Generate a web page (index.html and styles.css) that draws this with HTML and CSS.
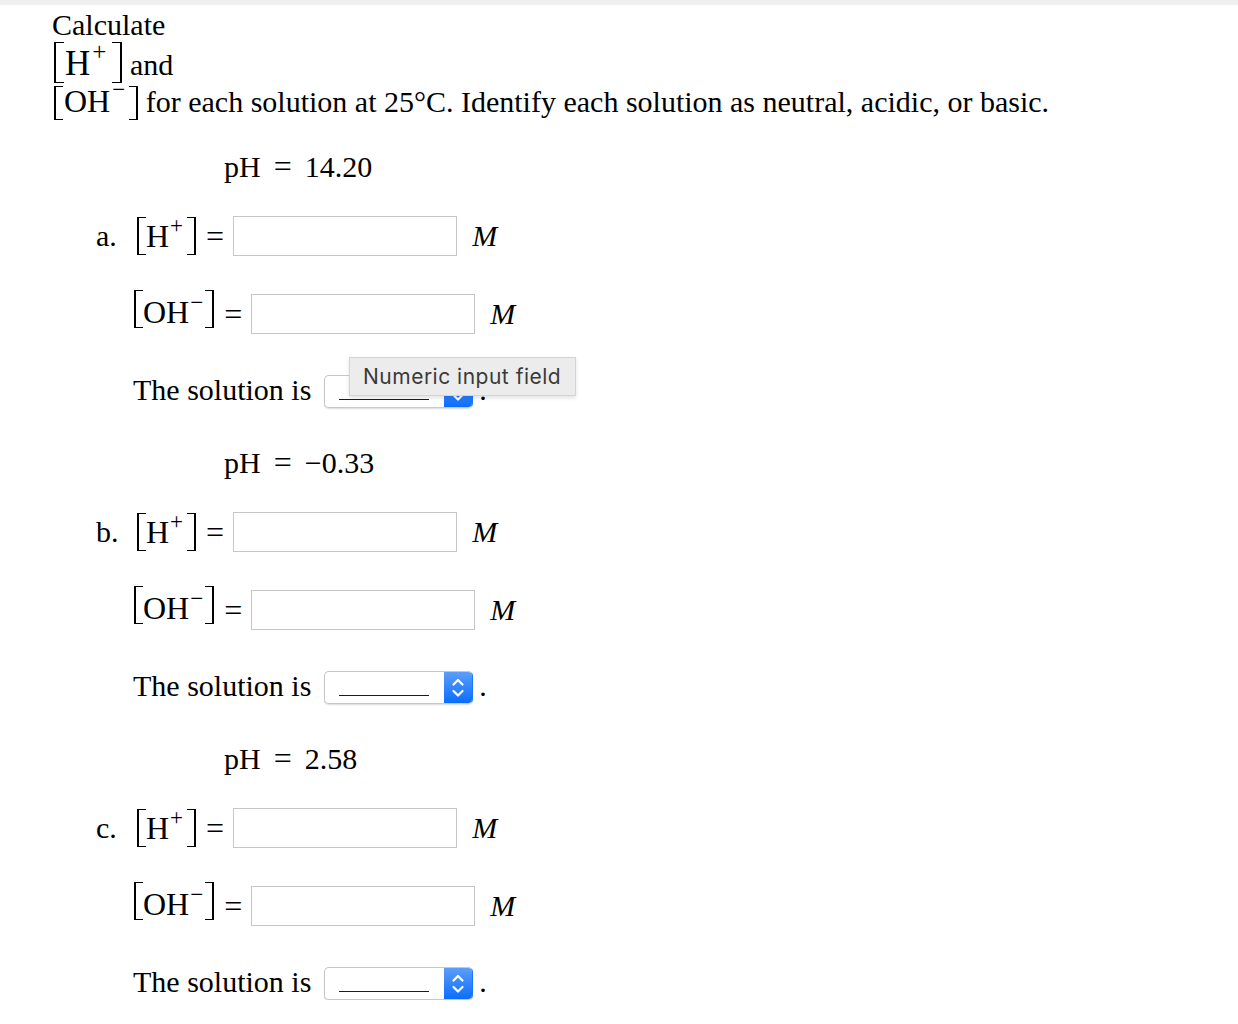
FILE: index.html
```html
<!DOCTYPE html>
<html lang="en">

<head>
    <meta http-equiv="Content-Type" content="text/html;charset=UTF-8">
    <meta name="viewport" content="width=device-width, initial-scale=1.0">
    <title>Calculate [H+] and [OH-]</title>
    <link rel="stylesheet" href="styles.css">
</head>

<body>
    <main class="question">
        <div class="intro">
            <div class="intro-line intro-line-first">Calculate</div>
            <div class="intro-line intro-line-ion"><span class="ion ion-h"><span class="bracket bracket-left"></span>H<sup class="charge">+</sup><span class="bracket bracket-right"></span></span> and</div>
            <div class="intro-line intro-line-last"><span class="ion ion-oh"><span class="bracket bracket-left"></span>OH<sup class="charge">&minus;</sup><span class="bracket bracket-right"></span></span> for each solution at 25°C. Identify each solution as neutral, acidic, or basic.</div>
        </div>

        <section class="part">
            <div class="ph">pH<span class="eq">=</span>14.20</div>
            <div class="row row-h">
                <span class="part-label">a.</span>
                <span class="ion ion-h"><span class="bracket bracket-left"></span>H<sup class="charge">+</sup><span class="bracket bracket-right"></span></span>
                <span class="eq">=</span>
                <input class="answer" type="text" aria-label="Numeric input field">
                <span class="unit">M</span>
            </div>
            <div class="row row-oh">
                <span class="ion ion-oh"><span class="bracket bracket-left"></span>OH<sup class="charge">&minus;</sup><span class="bracket bracket-right"></span></span>
                <span class="eq">=</span>
                <input class="answer" type="text" aria-label="Numeric input field">
                <span class="unit">M</span>
            </div>
            <div class="row row-choice">
                <span class="choice-label">The solution is</span>
                <div class="select">
                    <div class="select-value"><div class="select-blank"></div></div>
                    <div class="select-button">
                        <svg width="28" height="31" viewBox="0 0 28 31" fill="none" stroke="#ffffff" stroke-width="2.2" stroke-linecap="round" stroke-linejoin="round">
                            <polyline points="9.5,12.5 14,8 18.5,12.5" />
                            <polyline points="9.5,19 14,23.5 18.5,19" />
                        </svg>
                    </div>
                </div>
                <span class="period">.</span>
                <div class="tooltip">Numeric input field</div>
            </div>
        </section>

        <section class="part">
            <div class="ph">pH<span class="eq">=</span>&minus;0.33</div>
            <div class="row row-h">
                <span class="part-label">b.</span>
                <span class="ion ion-h"><span class="bracket bracket-left"></span>H<sup class="charge">+</sup><span class="bracket bracket-right"></span></span>
                <span class="eq">=</span>
                <input class="answer" type="text" aria-label="Numeric input field">
                <span class="unit">M</span>
            </div>
            <div class="row row-oh">
                <span class="ion ion-oh"><span class="bracket bracket-left"></span>OH<sup class="charge">&minus;</sup><span class="bracket bracket-right"></span></span>
                <span class="eq">=</span>
                <input class="answer" type="text" aria-label="Numeric input field">
                <span class="unit">M</span>
            </div>
            <div class="row row-choice">
                <span class="choice-label">The solution is</span>
                <div class="select">
                    <div class="select-value"><div class="select-blank"></div></div>
                    <div class="select-button">
                        <svg width="28" height="31" viewBox="0 0 28 31" fill="none" stroke="#ffffff" stroke-width="2.2" stroke-linecap="round" stroke-linejoin="round">
                            <polyline points="9.5,12.5 14,8 18.5,12.5" />
                            <polyline points="9.5,19 14,23.5 18.5,19" />
                        </svg>
                    </div>
                </div>
                <span class="period">.</span>
            </div>
        </section>

        <section class="part">
            <div class="ph">pH<span class="eq">=</span>2.58</div>
            <div class="row row-h">
                <span class="part-label">c.</span>
                <span class="ion ion-h"><span class="bracket bracket-left"></span>H<sup class="charge">+</sup><span class="bracket bracket-right"></span></span>
                <span class="eq">=</span>
                <input class="answer" type="text" aria-label="Numeric input field">
                <span class="unit">M</span>
            </div>
            <div class="row row-oh">
                <span class="ion ion-oh"><span class="bracket bracket-left"></span>OH<sup class="charge">&minus;</sup><span class="bracket bracket-right"></span></span>
                <span class="eq">=</span>
                <input class="answer" type="text" aria-label="Numeric input field">
                <span class="unit">M</span>
            </div>
            <div class="row row-choice">
                <span class="choice-label">The solution is</span>
                <div class="select">
                    <div class="select-value"><div class="select-blank"></div></div>
                    <div class="select-button">
                        <svg width="28" height="31" viewBox="0 0 28 31" fill="none" stroke="#ffffff" stroke-width="2.2" stroke-linecap="round" stroke-linejoin="round">
                            <polyline points="9.5,12.5 14,8 18.5,12.5" />
                            <polyline points="9.5,19 14,23.5 18.5,19" />
                        </svg>
                    </div>
                </div>
                <span class="period">.</span>
            </div>
        </section>
    </main>
</body>

</html>
```

FILE: styles.css
```css
body {
    margin: 0;
    border-top: 5px solid #f0f0f0;
    background-color: #ffffff;
    color: #000000;
    font-family: "Liberation Serif", "Times New Roman", serif;
    font-size: 30px;
}

.question {
    padding: 2px 0 0 52px;
}

.intro-line {
    white-space: nowrap;
}

.intro-line-first {
    height: 35px;
    line-height: 36px;
}

.intro-line-ion {
    height: 43px;
    line-height: 40px;
}

.intro-line-last {
    height: 36px;
    line-height: 33px;
}

.intro .ion {
    margin-left: 2px;
}

/* ion with square brackets */
.ion {
    display: inline-block;
    font-size: 32px;
    white-space: nowrap;
}

.bracket {
    display: inline-block;
    box-sizing: border-box;
    width: 9px;
    border: 0 solid #000000;
}

.bracket-left {
    border-width: 1.5px 0 1.5px 2px;
}

.bracket-right {
    border-width: 1.5px 2px 1.5px 0;
}

.ion-h .bracket {
    height: 38px;
    vertical-align: -8px;
}

.ion-h .bracket-right {
    margin-left: 4px;
}

.intro .ion-h {
    font-size: 35px;
}

.intro .ion-h .bracket {
    width: 10px;
    height: 41px;
}

.intro .ion-h .bracket-left {
    margin-right: 1px;
}

.intro .ion-h .bracket-right {
    margin-left: 6px;
}

.ion-oh .bracket {
    height: 38px;
    vertical-align: -5px;
}

.ion-oh .bracket-right {
    margin-left: 2px;
}

.row-oh .ion {
    margin-bottom: 6px;
}

.intro .ion-oh .bracket {
    height: 34px;
    vertical-align: -8px;
}

.intro .ion-oh .bracket-left {
    margin-right: 1px;
}

.intro .ion-oh .bracket-right {
    margin-left: 4px;
}

.charge {
    font-size: 23px;
    line-height: 0;
    margin-left: 1px;
}

.ion-h .charge {
    vertical-align: 14px;
}

.ion-oh .charge {
    vertical-align: 13.5px;
}

.intro .ion-h .charge {
    font-size: 25px;
    margin-left: 2px;
    vertical-align: 15px;
}

.intro .ion-oh .charge {
    margin-left: 2px;
    vertical-align: 15px;
}

.eq {
    font-size: 32px;
    margin: 0 9px 0 10px;
}

.part {
    margin-top: 34px;
}

.intro + .part {
    margin-top: 25px;
}

.ph {
    height: 40px;
    line-height: 40px;
    margin-left: 172px;
}

.ph .eq {
    margin: 0 13px;
}

.row {
    display: flex;
    align-items: center;
    height: 40px;
    line-height: 40px;
    padding-left: 82px;
}

.row-h {
    margin-top: 30px;
}

.row-oh {
    margin-top: 38px;
}

.row-choice {
    position: relative;
    height: 33px;
    line-height: 33px;
    margin-top: 41px;
    padding-left: 81px;
}

.part-label {
    width: 41px;
    margin-left: -38px;
    flex-shrink: 0;
}

.answer {
    box-sizing: border-box;
    width: 224px;
    height: 40px;
    margin: 0;
    padding: 0 8px;
    border: 1px solid #c6c6c6;
    border-radius: 0;
    background-color: #ffffff;
    font: inherit;
    outline: none;
}

.unit {
    font-style: italic;
    margin-left: 15px;
}

.choice-label {
    white-space: nowrap;
    margin-bottom: 4px;
}

.select {
    display: flex;
    box-sizing: border-box;
    width: 149px;
    height: 33px;
    margin-left: 13px;
    border: 1px solid #c9c9c9;
    border-right-color: #1f78fb;
    border-radius: 5px;
    overflow: hidden;
    background-color: #ffffff;
    box-shadow: 0 1px 1.5px rgba(0, 0, 0, 0.14);
}

.select-value {
    flex: 1;
    padding-left: 14px;
}

.select-blank {
    width: 90px;
    margin-top: 23px;
    border-top: 1.5px solid #1c1c1c;
}

.select-button {
    display: flex;
    align-items: center;
    justify-content: center;
    width: 28px;
    background: linear-gradient(#5b9ef9, #0b6dfd);
}

.period {
    margin-left: 6px;
    margin-bottom: 4px;
}

.tooltip {
    position: absolute;
    top: -18px;
    left: 297px;
    box-sizing: border-box;
    height: 39px;
    padding: 0 14px 0 13px;
    border: 1px solid #d4d4d4;
    background-color: #ececed;
    box-shadow: 0 2px 4px rgba(0, 0, 0, 0.12);
    color: #3a3a3a;
    font-family: Inter, "Liberation Sans", sans-serif;
    font-size: 21px;
    letter-spacing: 0.5px;
    line-height: 37px;
    white-space: nowrap;
}
```
